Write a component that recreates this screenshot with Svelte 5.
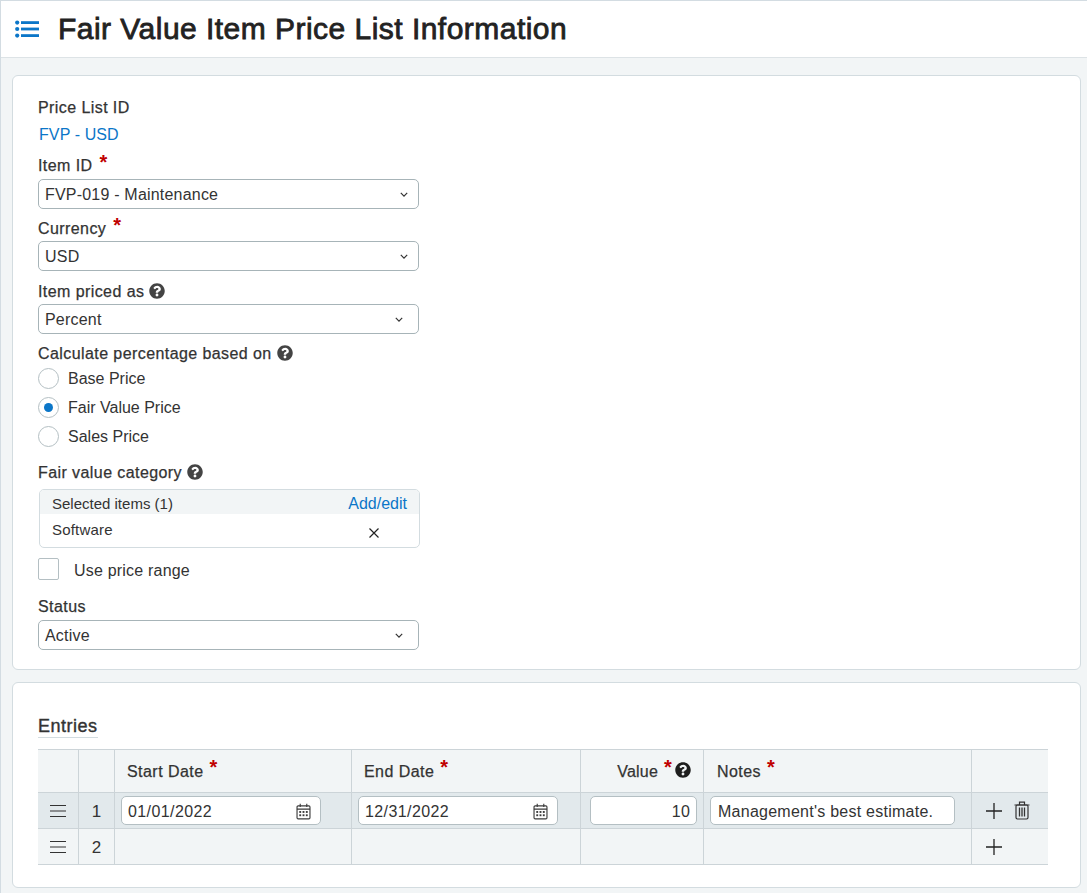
<script>
  const help = "M504 256c0 136.997-111.043 248-248 248S8 392.997 8 256C8 119.083 119.043 8 256 8s248 111.083 248 248zM262.655 90c-54.497 0-89.255 22.957-116.549 63.758-3.536 5.286-2.353 12.415 2.715 16.258l34.699 26.31c5.205 3.947 12.621 3.008 16.665-2.122 17.864-22.658 30.113-35.797 57.303-35.797 20.429 0 45.698 13.148 45.698 32.958 0 14.976-12.363 22.667-32.534 33.976C247.128 238.528 216 254.941 216 296v4c0 6.627 5.373 12 12 12h56c6.627 0 12-5.373 12-12v-1.333c0-28.462 83.186-29.647 83.186-106.667 0-58.002-60.165-102-116.531-102zM256 338c-25.365 0-46 20.635-46 46 0 25.364 20.635 46 46 46s46-20.636 46-46c0-25.365-20.635-46-46-46z";
</script>

{#snippet helpIcon(cls = '')}
  <svg class="help {cls}" viewBox="0 0 512 512" aria-hidden="true"><path d={help} fill="currentColor" /></svg>
{/snippet}

{#snippet chevron()}
  <svg class="chev" viewBox="0 0 10 6" aria-hidden="true"><path d="M1 1l4 4 4-4" fill="none" stroke="#333" stroke-width="1.5" /></svg>
{/snippet}

{#snippet calendar()}
  <svg class="cal" viewBox="0 0 16 18" aria-hidden="true">
    <g fill="none" stroke="#3a3a3a" stroke-width="1.2">
      <rect x="1.1" y="3" width="13.8" height="13.8" rx="1.2" />
      <path d="M4.5 .6v3.6M11.5 .6v3.6M1 6.5h14" />
    </g>
    <g fill="#3a3a3a">
      <rect x="3.5" y="8.5" width="2" height="2" /><rect x="7" y="8.5" width="2" height="2" /><rect x="10.5" y="8.5" width="2" height="2" />
      <rect x="3.5" y="12" width="2" height="2" /><rect x="7" y="12" width="2" height="2" /><rect x="10.5" y="12" width="2" height="2" />
    </g>
  </svg>
{/snippet}

{#snippet burger()}
  <svg class="burger" viewBox="0 0 16 14" aria-hidden="true"><path d="M0 1.5h16M0 7h16M0 12.5h16" stroke="#333" stroke-width="1.2" fill="none" /></svg>
{/snippet}

{#snippet plus()}
  <svg class="plus" viewBox="0 0 16 16" aria-hidden="true"><path d="M8 0v16M0 8h16" stroke="#222" stroke-width="1.3" fill="none" /></svg>
{/snippet}

<div class="page">
  <header class="top">
    <svg class="list" viewBox="0 0 24 18" aria-hidden="true">
      <g fill="#0b76c8">
        <circle cx="2.2" cy="2.6" r="2.1" /><circle cx="2.2" cy="9" r="2.1" /><circle cx="2.2" cy="15.6" r="2.1" />
        <rect x="6" y="1.2" width="18" height="2.8" /><rect x="6" y="7.6" width="18" height="2.8" /><rect x="6" y="14.2" width="18" height="2.8" />
      </g>
    </svg>
    <h1>Fair Value Item Price List Information</h1>
  </header>

  <main class="content">
    <section class="card form">
      <div class="label first">Price List ID</div>
      <a class="link-value" href="#top">FVP - USD</a>

      <div class="label item-id">Item ID <span class="req">*</span></div>
      <div class="select">FVP-019 - Maintenance {@render chevron()}</div>

      <div class="label currency">Currency <span class="req">*</span></div>
      <div class="select">USD {@render chevron()}</div>

      <div class="label priced">Item priced as {@render helpIcon()}</div>
      <div class="select inset">Percent {@render chevron()}</div>

      <div class="label calc">Calculate percentage based on {@render helpIcon()}</div>
      <div class="radios">
        <div class="radio-row"><span class="radio"></span><span class="opt">Base Price</span></div>
        <div class="radio-row"><span class="radio on"></span><span class="opt">Fair Value Price</span></div>
        <div class="radio-row"><span class="radio"></span><span class="opt">Sales Price</span></div>
      </div>

      <div class="label fair">Fair value category {@render helpIcon()}</div>
      <div class="picker">
        <div class="picker-head"><span>Selected items (1)</span><a href="#top">Add/edit</a></div>
        <div class="picker-row">
          <span>Software</span>
          <svg class="close" viewBox="0 0 10 10" aria-hidden="true"><path d="M.5.5l9 9M9.5.5l-9 9" stroke="#222" stroke-width="1.2" fill="none" /></svg>
        </div>
      </div>

      <div class="check-row"><span class="check"></span><span class="check-text">Use price range</span></div>

      <div class="label status">Status</div>
      <div class="select inset">Active {@render chevron()}</div>
    </section>

    <section class="card entries">
      <h2>Entries</h2>
      <div class="table">
        <div class="row head">
          <div class="cell"></div>
          <div class="cell"></div>
          <div class="cell th">Start Date <span class="req">*</span></div>
          <div class="cell th">End Date <span class="req">*</span></div>
          <div class="cell th right">Value <span class="req">*</span>{@render helpIcon('dark')}</div>
          <div class="cell th notes-head">Notes <span class="req">*</span></div>
          <div class="cell"></div>
        </div>
        <div class="row active">
          <div class="cell center">{@render burger()}</div>
          <div class="cell center num">1</div>
          <div class="cell pad start"><div class="input date">01/01/2022 {@render calendar()}</div></div>
          <div class="cell pad end"><div class="input date">12/31/2022 {@render calendar()}</div></div>
          <div class="cell pad value"><div class="input number">10</div></div>
          <div class="cell pad notes"><div class="input text">Management's best estimate.</div></div>
          <div class="cell actions">
            {@render plus()}
            <svg class="trash" viewBox="0 0 16 19" aria-hidden="true">
              <g fill="none" stroke="#333" stroke-width="1.2">
                <path d="M.5 4h15M5.5 3.5V1.2h5v2.3" />
                <rect x="2" y="4" width="12" height="14" rx="1.4" />
              </g>
              <path d="M5.5 6.5v9M8 6.5v9M10.5 6.5v9" stroke="#333" stroke-width="1.3" />
            </svg>
          </div>
        </div>
        <div class="row">
          <div class="cell center">{@render burger()}</div>
          <div class="cell center num">2</div>
          <div class="cell"></div>
          <div class="cell"></div>
          <div class="cell"></div>
          <div class="cell"></div>
          <div class="cell actions">{@render plus()}</div>
        </div>
      </div>
    </section>
  </main>
</div>

<style>
  :global(body) {
    margin: 0;
    background: #f2f5f6;
  }
  .page {
    height: 893px;
    box-sizing: border-box;
    border-left: 1px solid #d3dce2;
    border-top: 1px solid #d3dce2;
    font-family: "Liberation Sans", Arial, sans-serif;
    font-size: 16px;
    letter-spacing: 0.2px;
    line-height: 20px;
    color: #333;
    background: #f2f5f6;
    overflow: hidden;
  }
  .top {
    height: 56px;
    display: flex;
    align-items: center;
    background: #fff;
    border-bottom: 1px solid #dde3e6;
    box-sizing: content-box;
  }
  .list {
    width: 24px;
    height: 18px;
    margin-left: 14px;
    flex: none;
  }
  h1 {
    margin: 0 0 0 19px;
    font-size: 30px;
    letter-spacing: 0.47px;
    line-height: 36px;
    font-weight: 400;
    color: #222;
    -webkit-text-stroke: 0.8px #222;
  }
  .content {
    padding: 17px 6px 0 11px;
    display: flex;
    flex-direction: column;
    gap: 12px;
  }
  .card {
    background: #fff;
    border: 1px solid #d3dce0;
    border-radius: 6px;
  }
  .form {
    height: 595px;
    box-sizing: border-box;
    padding: 21px 25px 0;
  }
  .label {
    height: 20px;
    box-sizing: border-box;
    padding-top: 2px;
    display: flex;
    align-items: center;
    gap: 5px;
    letter-spacing: 0.42px;
    -webkit-text-stroke: 0.25px #333;
  }
  .label .help { margin-top: -2px; }
  .label .req { margin: -2px 0 0 2px; }
  .req {
    color: #c00000;
    font-size: 20px;
    font-weight: 700;
    line-height: 14px;
    align-self: flex-start;
    -webkit-text-stroke: 0;
  }
  .link-value {
    display: block;
    height: 20px;
    margin: 8px 0 -1px 1px;
    letter-spacing: 0.1px;
    color: #0b76c8;
    text-decoration: none;
  }
  .item-id { margin: 11px 0 4px; }
  .currency { margin: 9px 0 3px; }
  .priced { margin: 10px 0 3px; }
  .calc { margin: 9px 0 4px; }
  .fair { margin: 15px 0 7px; }
  .status { margin: 16px 0 4px; }
  .select {
    width: 381px;
    height: 30px;
    box-sizing: border-box;
    border: 1px solid #a7b4b8;
    border-radius: 5px;
    padding: 2px 10px 0 6px;
    display: flex;
    align-items: center;
    justify-content: space-between;
    background: #fff;
  }
  .select.inset { padding-right: 15px; }
  .chev {
    width: 8px;
    height: 5px;
    flex: none;
    margin-top: -2px;
  }
  .help {
    width: 16px;
    height: 16px;
    color: #444;
    flex: none;
  }
  .help.dark { color: #1e1e1e; margin: -4px 0 0 3px; }
  .radios {
    display: flex;
    flex-direction: column;
    gap: 7px;
  }
  .radio-row {
    height: 22px;
    display: flex;
    align-items: center;
    gap: 9px;
  }
  .opt {
    padding-top: 2px;
    letter-spacing: 0;
  }
  .radio {
    width: 21px;
    height: 21px;
    box-sizing: border-box;
    border: 1px solid #b4bfc3;
    border-radius: 50%;
    background: #fff;
    display: flex;
    align-items: center;
    justify-content: center;
  }
  .radio.on::after {
    content: "";
    width: 9px;
    height: 9px;
    border-radius: 50%;
    background: #0b76c8;
  }
  .picker {
    width: 381px;
    height: 59px;
    margin-left: 1px;
    box-sizing: border-box;
    border: 1px solid #d3dce0;
    border-radius: 5px;
    overflow: hidden;
    font-size: 15px;
  }
  .picker-head {
    height: 24px;
    display: flex;
    align-items: center;
    justify-content: space-between;
    padding: 4px 12px 0;
    box-sizing: border-box;
    letter-spacing: 0;
    background: #f2f5f6;
  }
  .picker-head a {
    font-size: 16px;
    color: #0b76c8;
    text-decoration: none;
  }
  .picker-row {
    padding: 6px 12px 0;
    display: flex;
  }
  .close {
    width: 10px;
    height: 10px;
    margin: 8px 28px 0 auto;
  }
  .check-row {
    display: flex;
    align-items: center;
    gap: 15px;
    height: 22px;
    margin-top: 10px;
  }
  .check-text { padding-top: 4px; }
  .check {
    width: 21px;
    height: 22px;
    box-sizing: border-box;
    border: 1px solid #b4bfc3;
    border-radius: 2px;
    background: #fff;
  }
  .entries {
    height: 206px;
    box-sizing: border-box;
    padding: 32px 25px 0;
  }
  h2 {
    margin: 0 0 11px;
    width: fit-content;
    font-size: 18px;
    letter-spacing: 0.5px;
    line-height: 22px;
    font-weight: 400;
    color: #333;
    -webkit-text-stroke: 0.4px #333;
    border-bottom: 1px solid #d3dce0;
  }
  .table {
    width: 1010px;
    border-top: 1px solid #ccd4d8;
  }
  .row {
    display: grid;
    grid-template-columns: 41px 36px 237px 229px 123px 268px 76px;
    height: 36px;
    background: #f2f5f6;
    border-bottom: 1px solid #ccd4d8;
    box-sizing: border-box;
  }
  .row.head { height: 43px; }
  .row.active { background: #e2e9ec; }
  .cell {
    display: flex;
    align-items: center;
    border-right: 1px solid #ccd4d8;
    box-sizing: border-box;
    min-width: 0;
  }
  .cell:last-child { border-right: 0; }
  .th {
    padding: 2px 0 0 12px;
    letter-spacing: 0.45px;
    -webkit-text-stroke: 0.25px #333;
  }
  .th .req { margin: 8px 0 0 6px; }
  .notes-head { padding-left: 13px; }
  .th.right {
    justify-content: flex-end;
    padding: 2px 12px 0 0;
    letter-spacing: 0.2px;
  }
  .center { justify-content: center; }
  .num { font-size: 17px; padding-top: 2px; }
  .pad { padding: 0 6px; }
  .value { padding: 0 6px 0 9px; }
  .input {
    flex: 1;
    min-width: 0;
    height: 29px;
    box-sizing: border-box;
    border: 1px solid #b4bfc3;
    border-radius: 5px;
    background: #fff;
    padding: 2px 6px 0;
    display: flex;
    align-items: center;
    white-space: nowrap;
  }
  .date {
    justify-content: space-between;
    padding-right: 9px;
    letter-spacing: 0.4px;
  }
  .text {
    padding-left: 7px;
    letter-spacing: 0.25px;
  }
  .start { padding-right: 30px; }
  .end { padding-right: 22px; }
  .number { justify-content: flex-end; }
  .notes { padding-right: 16px; }
  .cal {
    width: 15px;
    height: 17px;
    flex: none;
  }
  .burger {
    width: 16px;
    height: 14px;
  }
  .actions {
    padding-left: 14px;
    gap: 12px;
  }
  .plus {
    width: 16px;
    height: 16px;
    flex: none;
  }
  .trash {
    width: 16px;
    height: 19px;
    flex: none;
  }
</style>
